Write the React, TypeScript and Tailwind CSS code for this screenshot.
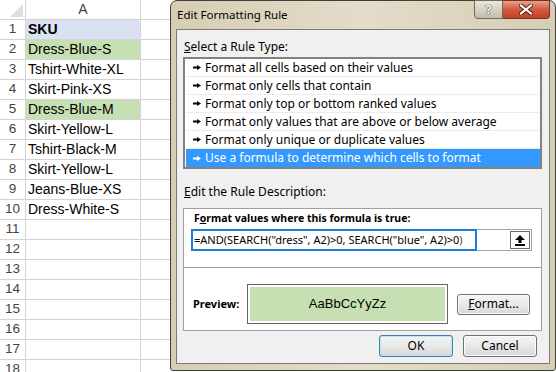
import React from "react";

const cells: Record<number, string> = {
  1: "SKU",
  2: "Dress-Blue-S",
  3: "Tshirt-White-XL",
  4: "Skirt-Pink-XS",
  5: "Dress-Blue-M",
  6: "Skirt-Yellow-L",
  7: "Tshirt-Black-M",
  8: "Skirt-Yellow-L",
  9: "Jeans-Blue-XS",
  10: "Dress-White-S",
};

const ruleTypes = [
  "Format all cells based on their values",
  "Format only cells that contain",
  "Format only top or bottom ranked values",
  "Format only values that are above or below average",
  "Format only unique or duplicate values",
  "Use a formula to determine which cells to format",
];

function Sheet() {
  const rows = Array.from({ length: 18 }, (_, i) => i + 1);
  return (
    <div className="w-[170px] h-[372px] overflow-hidden bg-white font-['Liberation_Sans',sans-serif] text-[14px] text-black">
      <div className="flex h-[20px] border-b border-[#d4d4d4]">
        <div className="relative w-[26px] border-r border-[#d4d4d4]">
          <svg className="absolute left-[10px] top-[4px]" width="13" height="13" viewBox="0 0 13 13">
            <polygon points="13,0 13,13 0,13" fill="#dedede" />
          </svg>
        </div>
        <div className="w-[115px] border-r border-[#d4d4d4] flex items-center justify-center text-[#444]">
          A
        </div>
        <div className="flex-1" />
      </div>
      {rows.map((n) => (
        <div key={n} className="flex h-[20px] border-b border-[#d4d4d4]">
          <div className="w-[26px] border-r border-[#d4d4d4] flex items-center justify-center text-[#444] text-[13.5px]">
            {n}
          </div>
          <div
            className={`w-[115px] border-r border-[#d4d4d4] flex items-center pl-[2px] ${
              n === 1 ? "bg-[#d9e1f2] font-bold" : n === 2 || n === 5 ? "bg-[#c6e0b4]" : ""
            }`}
          >
            {cells[n]}
          </div>
          <div className="flex-1" />
        </div>
      ))}
    </div>
  );
}

function RuleArrow({ light }: { light?: boolean }) {
  const c = light ? "#ffffff" : "#000000";
  return (
    <svg width="8" height="5" viewBox="0 0 8 5" className="shrink-0">
      <rect x="0" y="1.5" width="4.5" height="2" fill={c} />
      <polygon points="4,0 8,2.5 4,5" fill={c} />
    </svg>
  );
}

function Button({
  children,
  primary,
  className = "",
}: {
  children: React.ReactNode;
  primary?: boolean;
  className?: string;
}) {
  return (
    <div
      className={`flex items-center justify-center rounded-[3px] border bg-gradient-to-b from-[#f4f4f4] via-[#e9e9e9] to-[#d6d6d6] ${
        primary
          ? "border-[#3c7fb1] shadow-[inset_0_0_0_1px_#bfe3f7]"
          : "border-[#707070] shadow-[inset_0_0_0_1px_#fbfbfb]"
      } ${className}`}
    >
      {children}
    </div>
  );
}

function Dialog() {
  return (
    <div className="absolute left-[170px] top-0 w-[386px] h-[371px] flex flex-col rounded-t-[7px] rounded-b-[3px] border border-[#3f3f3f] bg-gradient-to-r from-[#d6cdb4] via-[#e4dcc9] to-[#d6cdb4] font-['Segoe_UI','Noto_Sans',sans-serif] text-[12px] text-black">
      {/* title bar */}
      <div className="flex h-[28px] shrink-0 justify-between">
        <div className="flex items-center pl-[6px] text-[11.5px] leading-none">Edit Formatting Rule</div>
        <div className="flex self-start -mt-[1px] mr-[5px]">
          <div className="flex h-[19px] w-[29px] items-center justify-center rounded-bl-[4px] border border-[#6f6a5e] bg-gradient-to-b from-[#ece8dd] to-[#c4bca8] text-[13px] font-bold leading-none text-[#f7f7f7] [text-shadow:0_0_1px_#333,0_0_1px_#333]">
            ?
          </div>
          <div className="flex h-[19px] w-[47px] items-center justify-center rounded-br-[4px] border border-l-0 border-[#6e3426] bg-gradient-to-b from-[#e9a08b] via-[#d15a3f] to-[#c3402a]">
            <svg width="14" height="11" viewBox="0 0 14 11">
              <path
                d="M2 1.5 L12 9.5 M12 1.5 L2 9.5"
                stroke="#4a1a10"
                strokeWidth="4"
                strokeLinecap="square"
              />
              <path
                d="M2 1.5 L12 9.5 M12 1.5 L2 9.5"
                stroke="#ffffff"
                strokeWidth="2.2"
                strokeLinecap="square"
              />
            </svg>
          </div>
        </div>
      </div>

      {/* client */}
      <div className="flex-1 px-[5px] pb-[6px]">
        <div className="flex h-full flex-col border border-[#7b7b7b] bg-[#f0f0f0] pl-[6px] pr-[7px]">
          <div className="mt-[9px] h-[16px] leading-[16px] pl-[1px]">
            <span className="underline">S</span>elect a Rule Type:
          </div>
          <div className="mt-[2px] h-[112px] border-2 border-[#828282] bg-white pl-[1px]">
            {ruleTypes.map((r, i) => {
              const sel = i === ruleTypes.length - 1;
              return (
                <div
                  key={r}
                  className={`flex h-[18px] items-center gap-[4px] pl-[7px] ${
                    sel ? "bg-[#3399ff] text-white" : "border-b border-[#ececec]"
                  }`}
                >
                  <RuleArrow light={sel} />
                  <span>{r}</span>
                </div>
              );
            })}
          </div>

          <div className="mt-[15px] h-[16px] leading-[16px] pl-[1px]">
            <span className="underline">E</span>dit the Rule Description:
          </div>
          <div className="mt-[8px] flex h-[123px] flex-col border border-[#a0a0a0] bg-white">
            <div className="mt-[1px] h-[16px] pl-[10px] text-[10.5px] font-bold leading-[16px]">
              F<span className="underline">o</span>rmat values where this formula is true:
            </div>
            <div className="relative ml-[7px] mt-[3px] flex h-[22px] w-[341px] items-center justify-end border border-[#a5a5a5] bg-white pr-[1px]">
              <div className="absolute -left-[1px] -top-[1px] flex h-[22px] w-[286px] items-center border-2 border-[#1a7fdc] pl-[1px] text-[11px] whitespace-nowrap">
                =AND(SEARCH("dress", A2)&gt;0, SEARCH("blue", A2)&gt;0<span className="text-[#8a1f3c]">)</span>
              </div>
              <div className="flex h-[18px] w-[20px] items-center justify-center border border-[#6a6a6a] bg-white">
                <svg width="10" height="11" viewBox="0 0 10 11">
                  <polygon points="5,0 10,5 6.5,5 6.5,8 3.5,8 3.5,5 0,5" fill="#000" />
                  <rect x="0" y="9" width="10" height="2" fill="#000" />
                </svg>
              </div>
            </div>
            <div className="mt-[16px] border-t border-[#a0a0a0]" />
            <div className="mt-[16px] flex items-center pl-[9px]">
              <div className="w-[54px] text-[11px] font-bold">Preview:</div>
              <div className="h-[40px] w-[201px] border border-[#646464] bg-white p-[2px]">
                <div className="flex h-full items-center justify-center bg-[#c6e0b4] font-['Liberation_Sans',sans-serif] text-[13px]">
                  AaBbCcYyZz
                </div>
              </div>
              <Button className="ml-[9px] h-[21px] w-[73px]">
                <span className="underline">F</span>ormat...
              </Button>
            </div>
          </div>

          <div className="mt-[4px] flex justify-end gap-[10px] pr-[5px]">
            <Button primary className="h-[22px] w-[74px]">
              OK
            </Button>
            <Button className="h-[22px] w-[74px]">Cancel</Button>
          </div>
        </div>
      </div>
    </div>
  );
}

export default function App() {
  return (
    <div className="relative h-[372px] w-[556px] overflow-hidden bg-white">
      <Sheet />
      <Dialog />
    </div>
  );
}
